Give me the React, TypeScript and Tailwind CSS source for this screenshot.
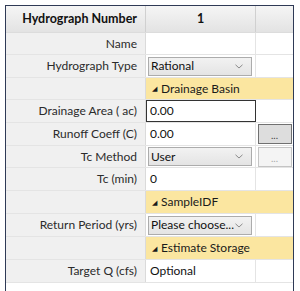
import React from "react";

const font = { fontFamily: 'Lato, "Noto Sans", Arial, sans-serif' };

function Chevron() {
  return (
    <svg width="8" height="5" viewBox="0 0 8 5" className="shrink-0">
      <path d="M0.5 0.8 L4 4 L7.5 0.8" fill="none" stroke="#8a8a8a" strokeWidth="1" />
    </svg>
  );
}

function Combo({ text }: { text: string }) {
  return (
    <div className="flex h-[19px] w-[104px] items-center justify-between whitespace-nowrap border border-[#acacac] bg-gradient-to-b from-[#f2f2f2] to-[#e4e4e4] pl-[2px] pr-[8px] text-[12px] text-[#111]">
      <span>{text}</span>
      <Chevron />
    </div>
  );
}

function Dots({ disabled }: { disabled?: boolean }) {
  return (
    <div
      className={
        disabled
          ? "flex h-[20px] w-[34px] items-end justify-center border border-[#c4c4c4] bg-[#f4f4f4] pb-[3px] text-[10px] leading-none text-[#a8a8a8]"
          : "flex h-[20px] w-[34px] items-end justify-center border border-[#707070] bg-[#dddddd] pb-[3px] text-[10px] leading-none text-[#444]"
      }
    >
      ...
    </div>
  );
}

function Row({
  label,
  h,
  value,
  extra,
}: {
  label: string;
  h: string;
  value?: React.ReactNode;
  extra?: React.ReactNode;
}) {
  return (
    <div className={`flex ${h} border-b border-[#e4e4e4]`}>
      <div className="flex w-[140px] shrink-0 items-center justify-end whitespace-nowrap border-r border-[#dadada] bg-[#f0f0f0] pr-[8px] text-[12px] text-[#2b2b2b]">
        {label}
      </div>
      <div className="flex w-[110px] shrink-0 items-center whitespace-nowrap border-r border-[#e4e4e4] pl-[2px] text-[12px] text-[#111]">
        {value}
      </div>
      <div className="flex flex-1 items-center justify-center">{extra}</div>
    </div>
  );
}

function Section({ title, h }: { title: string; h: string }) {
  return (
    <div className={`flex ${h} border-b border-[#e4e4e4]`}>
      <div className="w-[140px] shrink-0 border-r border-[#dadada] bg-[#f0f0f0]" />
      <div className="flex flex-1 items-center bg-[#fbe6a0] pl-[6px] text-[12px] text-[#1a1a1a]">
        <span className="mr-[4px] text-[7px] leading-none">◢</span>
        {title}
      </div>
    </div>
  );
}

export default function App() {
  return (
    <div className="h-[291px] w-[300px] overflow-hidden bg-white pl-[5px] pt-[5px]" style={font}>
      <div className="h-[300px] w-[289px] border-l border-r border-t border-[#2f3a56]">
        <div className="flex h-[27px] border-b border-[#dcdcdc] bg-gradient-to-b from-[#f5f5f5] to-[#e3e3e3]">
          <div className="flex w-[140px] shrink-0 items-center justify-end whitespace-nowrap border-r border-[#d0d0d0] pr-[8px] text-[12.5px] font-bold text-[#111]">
            Hydrograph Number
          </div>
          <div className="flex w-[110px] shrink-0 items-center justify-center border-r border-[#d0d0d0] text-[12.5px] font-bold text-[#111]">
            1
          </div>
          <div className="flex-1" />
        </div>
        <Row label="Name" h="h-[22px]" />
        <Row label="Hydrograph Type" h="h-[23px]" value={<Combo text="Rational" />} />
        <Section title="Drainage Basin" h="h-[22px]" />
        <div className="flex h-[23px] border-b border-[#e4e4e4]">
          <div className="flex w-[140px] shrink-0 items-center justify-end whitespace-nowrap border-r border-[#dadada] bg-[#f0f0f0] pr-[8px] text-[12px] text-[#2b2b2b]">
            Drainage Area ( ac)
          </div>
          <div className="flex w-[110px] shrink-0 items-center border border-[#333] pl-[3px] text-[12px] text-[#111]">
            0.00
          </div>
          <div className="flex-1" />
        </div>
        <Row label="Runoff Coeff (C)" h="h-[23px]" value={<span className="pl-[2px]">0.00</span>} extra={<Dots />} />
        <Row label="Tc Method" h="h-[22px]" value={<Combo text="User" />} extra={<Dots disabled />} />
        <Row label="Tc (min)" h="h-[23px]" value={<span className="pl-[2px]">0</span>} />
        <Section title="SampleIDF" h="h-[23px]" />
        <Row label="Return Period (yrs)" h="h-[23px]" value={<Combo text="Please choose..." />} />
        <Section title="Estimate Storage" h="h-[23px]" />
        <Row label="Target Q (cfs)" h="h-[23px]" value={<span className="pl-[2px]">Optional</span>} />
      </div>
    </div>
  );
}
